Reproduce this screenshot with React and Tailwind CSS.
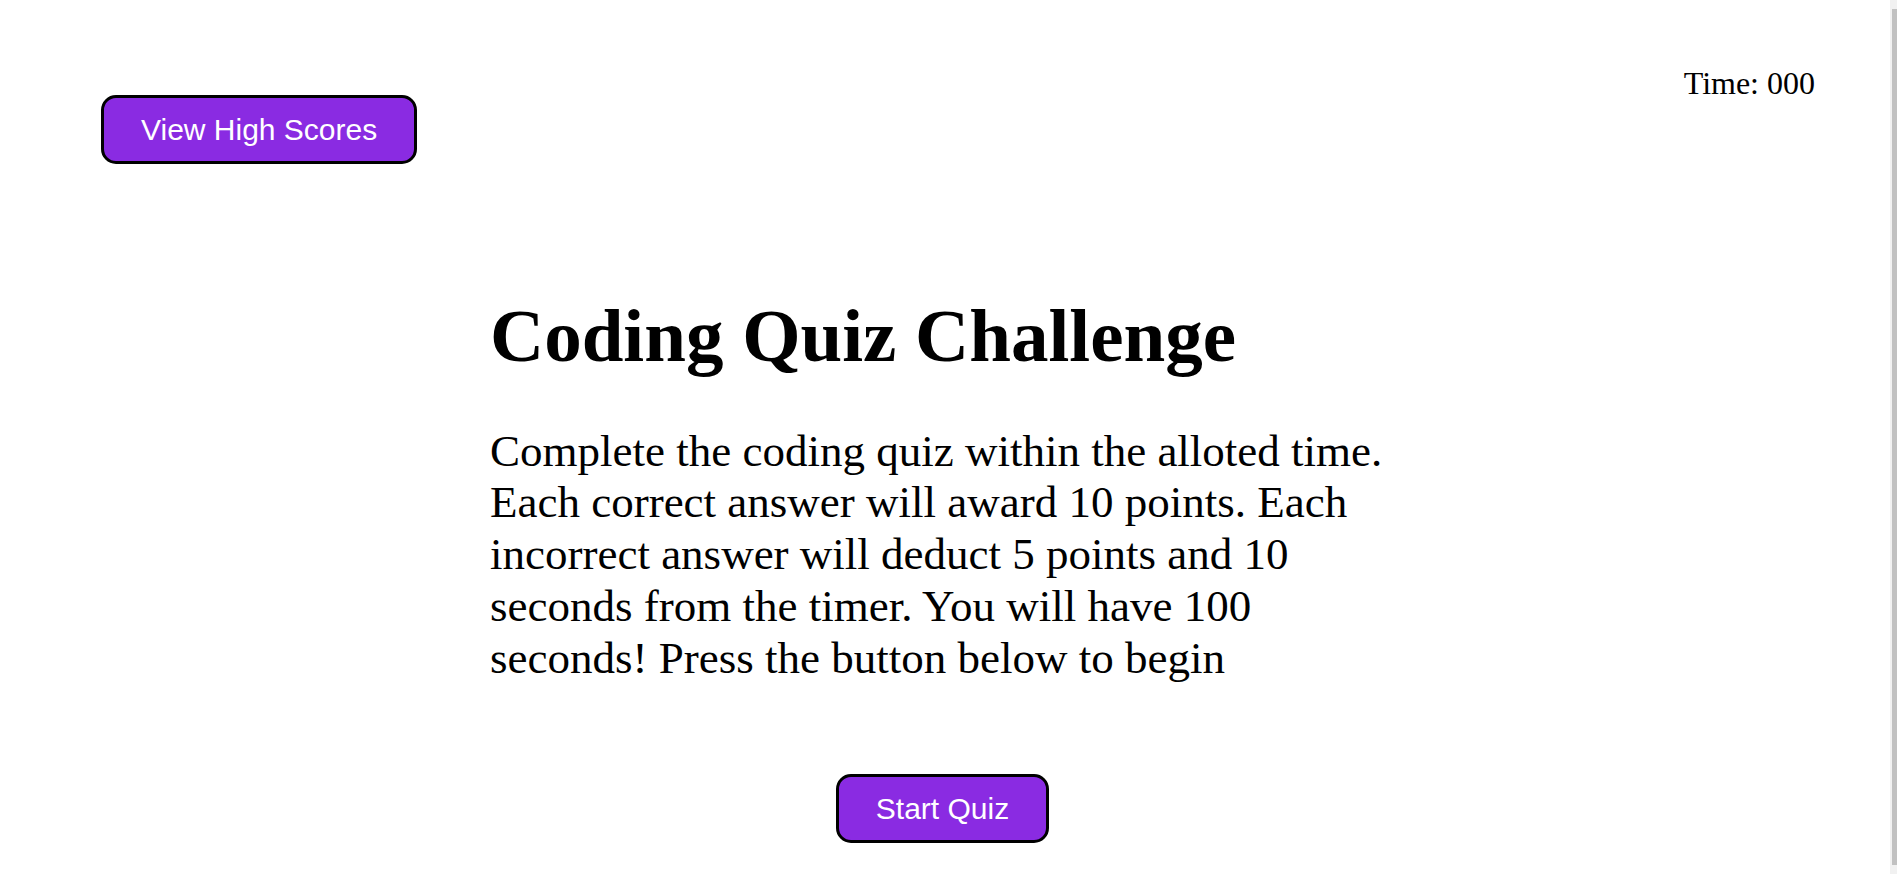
import React from 'react';

const serif = { fontFamily: '"Liberation Serif", "Times New Roman", serif' };

const PurpleButton = ({ children, className = '' }) => (
  <button
    className={`bg-[#8a2be2] text-white border-[3px] border-black rounded-[15px] px-[37px] h-[69px] text-[30px] leading-none font-['Liberation_Sans',Arial,sans-serif] ${className}`}
  >
    {children}
  </button>
);

export default function App() {
  return (
    <div className="min-h-screen flex bg-white text-black" style={serif}>
      <div className="flex-1 flex flex-col">
        <header className="flex justify-between items-start pl-[101px] pr-[75px]">
          <PurpleButton className="mt-[95px]">View High Scores</PurpleButton>
          <div className="mt-[59px] text-[32px]">Time: 000</div>
        </header>

        <main className="w-[910px] mx-auto">
          <h1 className="mt-[116px] text-[75px] font-bold">Coding Quiz Challenge</h1>
          <p className="mt-[33px] text-[45px] leading-[51.75px]">
            Complete the coding quiz within the alloted time. Each correct answer will award 10 points. Each
            incorrect answer will deduct 5 points and 10 seconds from the timer. You will have 100 seconds! Press
            the button below to begin
          </p>
          <div className="flex justify-center mt-[90px] pr-[5px]">
            <PurpleButton>Start Quiz</PurpleButton>
          </div>
        </main>
      </div>

      {/* scrollbar strip on the right edge */}
      <div className="w-[7px] bg-[#f1f1f1] flex flex-col">
        <div className="flex-1 ml-[2px] mt-[9px] mb-[9px] bg-[#c1c1c1]" />
      </div>
    </div>
  );
}
